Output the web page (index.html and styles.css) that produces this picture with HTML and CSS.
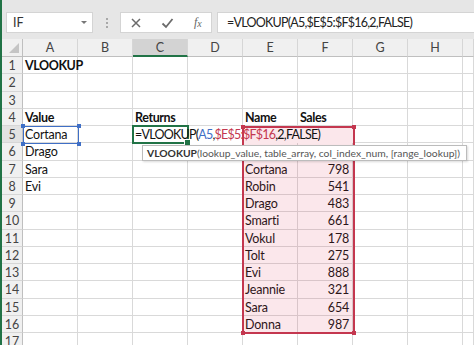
FILE: index.html
```html
<!DOCTYPE html>
<html>
<head>
<meta charset="utf-8">
<link rel="stylesheet" href="styles.css">
</head>
<body>
<div class="app">
  <div class="toolbar">
    <div class="namebox"><span>IF</span><span class="dd"></span></div>
    <div class="grip"><i></i><i></i><i></i></div>
    <div class="btns">
      <svg class="ico x" width="12" height="12" viewBox="0 0 12 12"><path d="M2 2 L10 10 M10 2 L2 10" stroke="#6b6b6b" stroke-width="1.5" fill="none"/></svg>
      <svg class="ico ok" width="13" height="12" viewBox="0 0 13 12"><path d="M1.5 6.5 L5 10 L11.5 2" stroke="#6b6b6b" stroke-width="1.8" fill="none"/></svg>
      <span class="fx"><i>f</i><span>x</span></span>
    </div>
    <div class="fbar">=VLOOKUP(A5,$E$5:$F$16,2,FALSE)</div>
  </div>
  <div class="sheet">
    <div class="corner"></div><div class="ch">A</div><div class="ch">B</div><div class="ch act">C</div><div class="ch">D</div><div class="ch">E</div><div class="ch">F</div><div class="ch">G</div><div class="ch">H</div><div class="ch">&nbsp;</div>

    <div class="rh">1</div><div class="c b">VLOOKUP</div><div class="c"></div><div class="c"></div><div class="c"></div><div class="c"></div><div class="c"></div><div class="c"></div><div class="c"></div><div class="c"></div>
    <div class="rh">2</div><div class="c"></div><div class="c"></div><div class="c"></div><div class="c"></div><div class="c"></div><div class="c"></div><div class="c"></div><div class="c"></div><div class="c"></div>
    <div class="rh">3</div><div class="c"></div><div class="c"></div><div class="c"></div><div class="c"></div><div class="c"></div><div class="c"></div><div class="c"></div><div class="c"></div><div class="c"></div>
    <div class="rh">4</div><div class="c b">Value</div><div class="c"></div><div class="c b">Returns</div><div class="c"></div><div class="c b">Name</div><div class="c b">Sales</div><div class="c"></div><div class="c"></div><div class="c"></div>
    <div class="rh ra">5</div><div class="c">Cortana</div><div class="c"></div><div class="c"></div><div class="c"></div><div class="c"></div><div class="c"></div><div class="c"></div><div class="c"></div><div class="c"></div>
    <div class="rh">6</div><div class="c">Drago</div><div class="c"></div><div class="c"></div><div class="c"></div><div class="c"></div><div class="c"></div><div class="c"></div><div class="c"></div><div class="c"></div>
    <div class="rh">7</div><div class="c">Sara</div><div class="c"></div><div class="c"></div><div class="c"></div><div class="c">Cortana</div><div class="c n">798</div><div class="c"></div><div class="c"></div><div class="c"></div>
    <div class="rh">8</div><div class="c">Evi</div><div class="c"></div><div class="c"></div><div class="c"></div><div class="c">Robin</div><div class="c n">541</div><div class="c"></div><div class="c"></div><div class="c"></div>
    <div class="rh">9</div><div class="c"></div><div class="c"></div><div class="c"></div><div class="c"></div><div class="c">Drago</div><div class="c n">483</div><div class="c"></div><div class="c"></div><div class="c"></div>
    <div class="rh">10</div><div class="c"></div><div class="c"></div><div class="c"></div><div class="c"></div><div class="c">Smarti</div><div class="c n">661</div><div class="c"></div><div class="c"></div><div class="c"></div>
    <div class="rh">11</div><div class="c"></div><div class="c"></div><div class="c"></div><div class="c"></div><div class="c">Vokul</div><div class="c n">178</div><div class="c"></div><div class="c"></div><div class="c"></div>
    <div class="rh">12</div><div class="c"></div><div class="c"></div><div class="c"></div><div class="c"></div><div class="c">Tolt</div><div class="c n">275</div><div class="c"></div><div class="c"></div><div class="c"></div>
    <div class="rh">13</div><div class="c"></div><div class="c"></div><div class="c"></div><div class="c"></div><div class="c">Evi</div><div class="c n">888</div><div class="c"></div><div class="c"></div><div class="c"></div>
    <div class="rh">14</div><div class="c"></div><div class="c"></div><div class="c"></div><div class="c"></div><div class="c">Jeannie</div><div class="c n">321</div><div class="c"></div><div class="c"></div><div class="c"></div>
    <div class="rh">15</div><div class="c"></div><div class="c"></div><div class="c"></div><div class="c"></div><div class="c">Sara</div><div class="c n">654</div><div class="c"></div><div class="c"></div><div class="c"></div>
    <div class="rh">16</div><div class="c"></div><div class="c"></div><div class="c"></div><div class="c"></div><div class="c">Donna</div><div class="c n">987</div><div class="c"></div><div class="c"></div><div class="c"></div>
    <div class="rh">17</div><div class="c"></div><div class="c"></div><div class="c"></div><div class="c"></div><div class="c"></div><div class="c"></div><div class="c"></div><div class="c"></div><div class="c"></div>

    <div class="refbox"><i class="h tl"></i><i class="h tr"></i><i class="h bl"></i><i class="h br"></i></div>
    <div class="editor"></div>
    <div class="range"><i class="h tl"></i><i class="h tr"></i><i class="h bl"></i><i class="h br"></i></div>
    <div class="active"><i class="fill"></i></div>
    <div class="edtext">=VLOOKUP(<span class="rb">A5</span>,<span class="rr">$E$5:$F$16</span>,2,FALSE)</div>
    <div class="tip"><b>VLOOKUP</b>(lookup_value, table_array, col_index_num, [range_lookup])</div>
  </div>
</div>
</body>
</html>
```
FILE: styles.css
```css
html, body {
  margin: 0;
  padding: 0;
  width: 474px;
  height: 345px;
  overflow: hidden;
  background: #fff;
  font-family: "Lato", "Liberation Sans", sans-serif;
}

.app {
  height: 345px;
  border-left: 2px solid #217346;
  display: flex;
  flex-direction: column;
}

.toolbar {
  height: 39px;
  flex: none;
  background: #e6e6e6;
  display: flex;
  align-items: flex-start;
  padding-top: 12px;
  box-sizing: border-box;
  padding-left: 4px;
}

.namebox, .btns, .fbar {
  height: 21px;
  background: #fff;
  box-sizing: border-box;
  border: 1px solid #d4d4d4;
}

.namebox {
  width: 87px;
  display: flex;
  align-items: center;
  justify-content: space-between;
  padding: 0 5px 0 6px;
  font-size: 12.5px;
  color: #333;
}

.dd {
  width: 0;
  height: 0;
  border-left: 3px solid transparent;
  border-right: 3px solid transparent;
  border-top: 3px solid #777;
}

.grip {
  width: 27px;
  height: 21px;
  display: flex;
  flex-direction: column;
  align-items: center;
  justify-content: center;
  gap: 2px;
}
.grip i {
  width: 2px;
  height: 2px;
  background: #a8a8a8;
}

.btns {
  width: 92px;
  display: flex;
  align-items: center;
  padding-left: 9px;
}
.btns .x { margin-right: 19px; }
.btns .ok { margin-right: 20px; }

.fx {
  font-family: "Liberation Serif", serif;
  font-size: 12px;
  color: #666;
  font-style: italic;
}
.fx span {
  font-size: 10px;
  position: relative;
  top: 1px;
}

.fbar {
  flex: 1;
  margin-left: 5px;
  border-right: none;
  font-size: 12.5px;
  letter-spacing: -0.75px;
  color: #222;
  padding-left: 9px;
  line-height: 19px;
}

.sheet {
  flex: 1;
  position: relative;
  display: grid;
  grid-template-columns: 21px repeat(8, 55px) 1fr;
  grid-template-rows: 18px repeat(17, 17.25px);
  font-size: 12.5px;
  color: #111;
}

.corner, .ch {
  background: #f0f0f0;
  border-bottom: 1px solid #bfbfbf;
  box-sizing: border-box;
}
.corner {
  position: relative;
  border-right: 1px solid #bfbfbf;
}
.corner::after {
  content: "";
  position: absolute;
  right: 3px;
  bottom: 3px;
  width: 0;
  height: 0;
  border-left: 10px solid transparent;
  border-bottom: 10px solid #c4c4c4;
}
.ch {
  border-right: 1px solid #d6d6d6;
  text-align: center;
  line-height: 18px;
  color: #444;
  font-size: 12.5px;
}
.ch.act {
  background: #d3d3d3;
  border-bottom: 2px solid #217346;
}

.rh {
  background: #f0f0f0;
  border-right: 1px solid #bfbfbf;
  border-bottom: 1px solid #d6d6d6;
  box-sizing: border-box;
  text-align: center;
  color: #444;
  font-size: 12.5px;
  line-height: 17px;
}
.rh.ra {
  background: #e2e2e2;
}

.c {
  border-right: 1px solid #d9d9d9;
  border-bottom: 1px solid #d9d9d9;
  box-sizing: border-box;
  padding-left: 2px;
  line-height: 17px;
  letter-spacing: -0.2px;
  white-space: nowrap;
  overflow: visible;
}
.c.b { font-weight: bold; letter-spacing: -0.4px; }
.c.n { text-align: right; padding-right: 3px; }

.refbox {
  position: absolute;
  left: 21px;
  top: 87px;
  width: 56px;
  height: 18.25px;
  box-sizing: border-box;
  border: 1px solid #3f6fc6;
}
.range {
  position: absolute;
  left: 240px;
  top: 87px;
  width: 113px;
  height: 208px;
  box-sizing: border-box;
  border: 2px solid #c4374f;
  background: rgba(220, 60, 90, 0.12);
}
.h {
  position: absolute;
  width: 4px;
  height: 4px;
}
.refbox .h { background: #3f6fc6; }
.range .h { background: #c4374f; }
.h.tl { left: -3px; top: -3px; }
.h.tr { right: -3px; top: -3px; }
.h.bl { left: -3px; bottom: -3px; }
.h.br { right: -3px; bottom: -3px; }

.editor {
  position: absolute;
  left: 131px;
  top: 87px;
  width: 221px;
  height: 17.25px;
  background: #fff;
}
.active {
  position: absolute;
  left: 130px;
  top: 86px;
  width: 57px;
  height: 19.25px;
  box-sizing: border-box;
  border: 2px solid #217346;
}
.fill {
  position: absolute;
  right: -4px;
  bottom: -4px;
  width: 5px;
  height: 5px;
  background: #217346;
  border: 1px solid #fff;
}
.edtext {
  position: absolute;
  left: 133px;
  top: 87px;
  line-height: 17px;
  letter-spacing: -0.75px;
  white-space: nowrap;
  color: #111;
}
.rb { color: #3f6fc6; }
.rr { color: #c4374f; }

.tip {
  position: absolute;
  left: 140px;
  top: 106px;
  width: 325px;
  height: 16px;
  box-sizing: border-box;
  background: #fff;
  border: 1px solid #bcbcbc;
  box-shadow: 1px 1px 2px rgba(0,0,0,0.15);
  font-size: 10.3px;
  line-height: 14px;
  padding-left: 4px;
  color: #555;
  white-space: nowrap;
}
.tip b { color: #333; }
```
